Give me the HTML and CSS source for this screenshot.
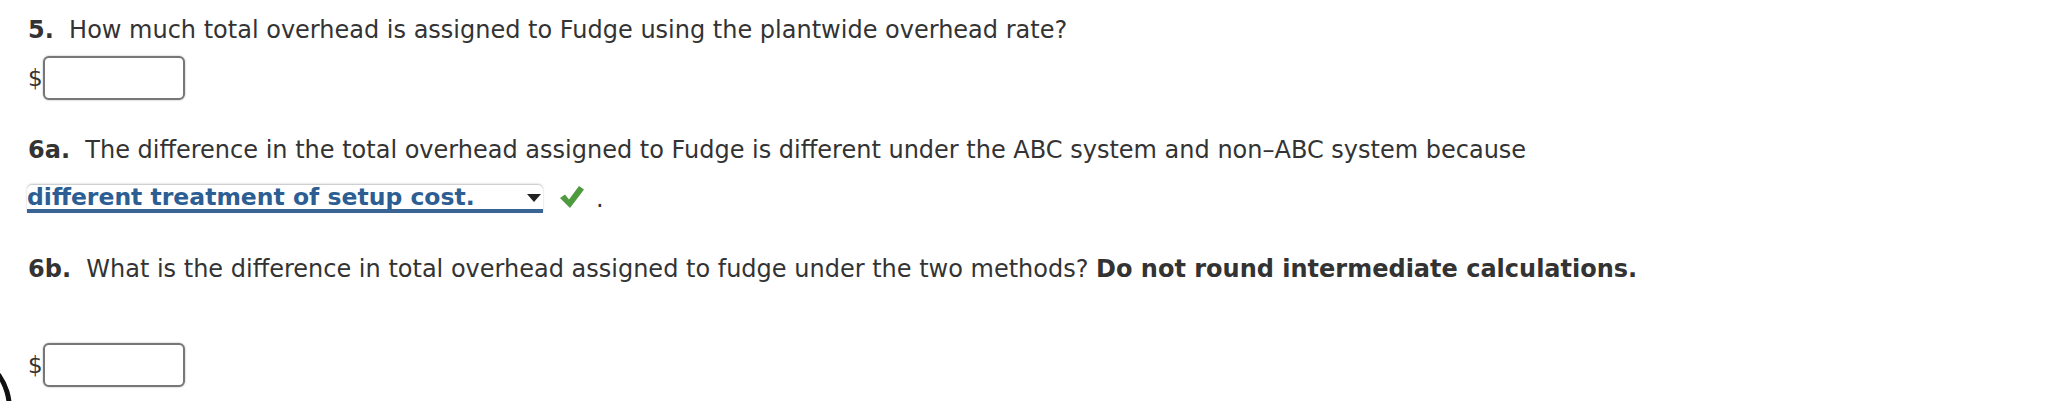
FILE: index.html
```html
<!DOCTYPE html>
<html>
<head>
<meta charset="utf-8">
<link rel="stylesheet" href="styles.css">
</head>
<body>
<div class="page">
  <p class="q q5"><b>5.</b>&nbsp; How much total overhead is assigned to Fudge using the plantwide overhead rate?</p>
  <div class="ans a5"><span class="cur">$</span><span class="box"></span></div>

  <p class="q q6a"><b>6a.</b>&nbsp; The difference in the total overhead assigned to Fudge is different under the ABC system and non–ABC system because</p>
  <div class="sel-row">
    <span class="select">different treatment of setup cost.<svg class="arrow" width="14" height="8" viewBox="0 0 14 8"><path d="M0 0H14L7 8Z" fill="#222"/></svg></span>
    <svg class="check" width="25" height="24" viewBox="0 0 25 24"><path d="M1 13L6 9.5L10 14.5L20 1L25 4.5L11 23Z" fill="#4e9a3e"/></svg>
    <span class="dot">.</span>
  </div>

  <p class="q q6b"><b>6b.</b>&nbsp; What is the difference in total overhead assigned to fudge under the two methods? <b>Do not round intermediate calculations.</b></p>
  <div class="ans a6b"><span class="cur">$</span><span class="box"></span></div>

  <div class="ring"></div>
</div>
</body>
</html>
```
FILE: styles.css
```css
html, body {
  margin: 0;
  padding: 0;
  background: #fff;
}
.page {
  position: relative;
  width: 2060px;
  height: 401px;
  overflow: hidden;
  font-family: "DejaVu Sans", Verdana, sans-serif;
  color: #333;
  padding-left: 28px;
  box-sizing: border-box;
}
.q {
  margin: 0;
  font-size: 24px;
  line-height: 28px;
  white-space: nowrap;
}
.q b {
  font-weight: bold;
}
.q5 { padding-top: 16px; }
.ans {
  display: flex;
  align-items: center;
}
.a5 { margin-top: 12px; }
.cur {
  font-size: 23px;
  width: 15px;
  color: #333;
}
.box {
  display: block;
  width: 142px;
  height: 44px;
  box-sizing: border-box;
  border: 2px solid #777;
  border-radius: 6px;
  box-shadow: 0 0 2px rgba(0,0,0,0.35);
  background: #fff;
}
.q6a { margin-top: 36px; }
.sel-row {
  display: flex;
  align-items: center;
  margin-top: 20px;
  height: 30px;
}
.select {
  display: flex;
  align-items: center;
  justify-content: space-between;
  width: 516px;
  height: 28px;
  box-sizing: border-box;
  margin-left: -1px;
  padding: 0 2px 0 0;
  font-size: 23.5px;
  font-weight: bold;
  color: #2c5e94;
  background: #fff;
  border-radius: 5px 5px 0 0;
  box-shadow: 0 -1px 2px rgba(0,0,0,0.25);
  border-bottom: 4px solid #3a6494;
}
.arrow { margin-top: 2px; }
.check { margin-left: 16px; margin-top: -4px; }
.dot { margin-left: 12px; font-size: 24px; }
.q6b { margin-top: 41px; }
.a6b { margin-top: 60px; }
.ring {
  position: absolute;
  left: -60px;
  top: 360px;
  width: 62px;
  height: 90px;
  border: 5px solid #111;
  border-radius: 50%;
}
```
